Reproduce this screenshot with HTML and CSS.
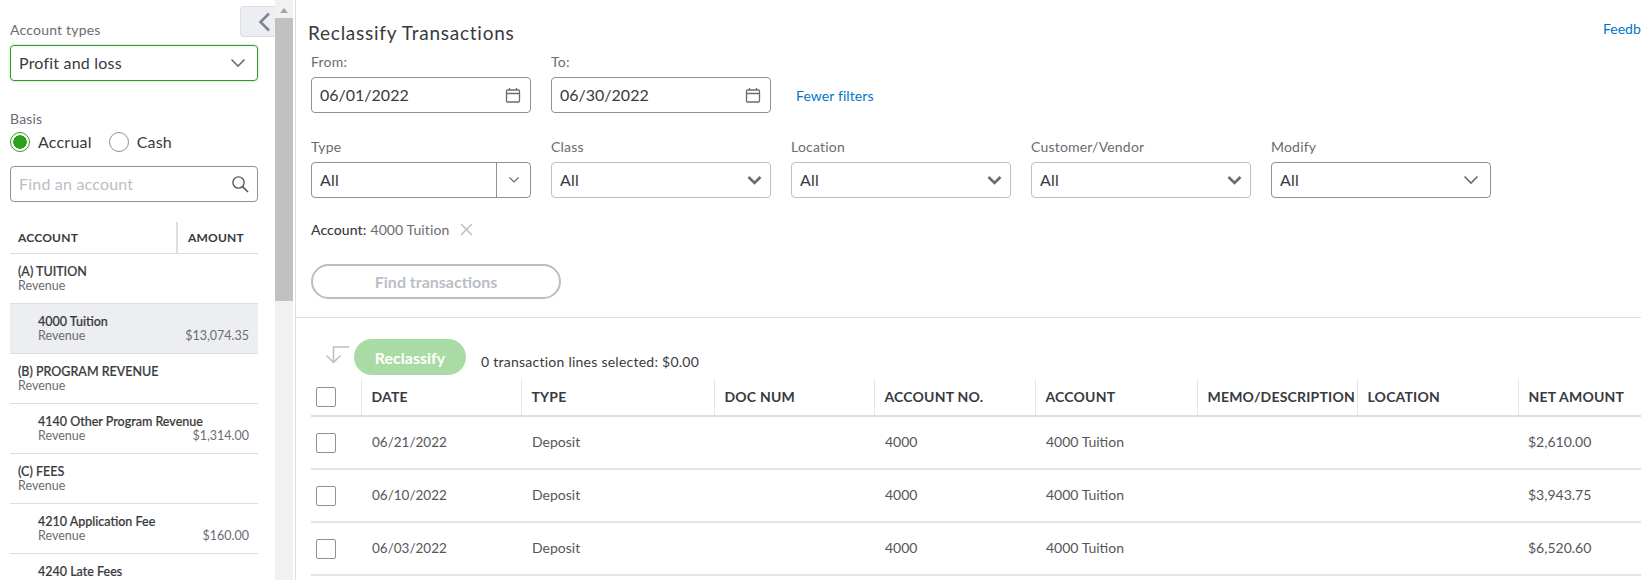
FILE: index.html
```html
<!doctype html>
<html>
	<head>
		<title>Reclassify Transactions</title>
		<link rel='stylesheet' href='styles.css'>
	</head>
	<body>
		<div class='sidebar'>
			<button class='collapse' type='button' aria-label='Collapse'>
				<svg width='13' height='20' viewBox='0 0 13 20'><path d='M11 1.500 2.500 10l8.500 8.500' fill='none' stroke='#7d8794' stroke-width='2.600'/></svg>
			</button>
			<div class='side-label'>Account types</div>
			<div class='field focus'>
				<span class='value'>Profit and loss</span>
				<svg class='chev' width='16' height='10' viewBox='0 0 16 10'><path d='M1.500 1.500 8 8l6.500-6.500' fill='none' stroke='#6b6c72' stroke-width='1.600'/></svg>
			</div>
			<div class='side-label basis'>Basis</div>
			<div class='radios'>
				<span class='radio on'></span><span class='radio-text'>Accrual</span>
				<span class='radio'></span><span class='radio-text'>Cash</span>
			</div>
			<div class='field search'>
				<span class='placeholder'>Find an account</span>
				<svg width='18' height='18' viewBox='0 0 18 18'><circle cx='7.500' cy='7.500' r='5.600' fill='none' stroke='#55565b' stroke-width='1.400'/><path d='m11.600 11.600 5.400 5.400' stroke='#55565b' stroke-width='1.600'/></svg>
			</div>
			<div class='acct-head'>
				<div class='acct-col'>ACCOUNT</div>
				<div class='amt-col'>AMOUNT</div>
			</div>
			<div class='acct-row group'>
				<div class='acct-name'>(A) TUITION</div>
				<div class='acct-sub'><span>Revenue</span></div>
			</div>
			<div class='acct-row child selected'>
				<div class='acct-name'>4000 Tuition</div>
				<div class='acct-sub'><span>Revenue</span><span>$13,074.35</span></div>
			</div>
			<div class='acct-row group'>
				<div class='acct-name'>(B) PROGRAM REVENUE</div>
				<div class='acct-sub'><span>Revenue</span></div>
			</div>
			<div class='acct-row child'>
				<div class='acct-name'>4140 Other Program Revenue</div>
				<div class='acct-sub'><span>Revenue</span><span>$1,314.00</span></div>
			</div>
			<div class='acct-row group'>
				<div class='acct-name'>(C) FEES</div>
				<div class='acct-sub'><span>Revenue</span></div>
			</div>
			<div class='acct-row child'>
				<div class='acct-name'>4210 Application Fee</div>
				<div class='acct-sub'><span>Revenue</span><span>$160.00</span></div>
			</div>
			<div class='acct-row child'>
				<div class='acct-name'>4240 Late Fees</div>
			</div>
		</div>
		<div class='scrollbar'>
			<div class='scroll-up'></div>
			<div class='scroll-thumb'></div>
		</div>
		<div class='main'>
			<div class='filters'>
				<div class='title-row'>
					<h1>Reclassify Transactions</h1>
					<a class='feedback' href='#'>Feedback</a>
				</div>
				<div class='filter-row dates'>
					<div class='filter'>
						<label>From:</label>
						<div class='field'>
							<span class='value date'>06/01/2022</span>
							<svg class='cal' width='16' height='16' viewBox='0 0 16 16'><path d='M2.500 3h11a1 1 0 0 1 1 1v10a1 1 0 0 1-1 1h-11a1 1 0 0 1-1-1V4a1 1 0 0 1 1-1zM1.500 6.500h13M4.500 1v2.500M11.500 1v2.500' fill='none' stroke='#6b6c72' stroke-width='1.300'/></svg>
						</div>
					</div>
					<div class='filter'>
						<label>To:</label>
						<div class='field'>
							<span class='value date'>06/30/2022</span>
							<svg class='cal' width='16' height='16' viewBox='0 0 16 16'><path d='M2.500 3h11a1 1 0 0 1 1 1v10a1 1 0 0 1-1 1h-11a1 1 0 0 1-1-1V4a1 1 0 0 1 1-1zM1.500 6.500h13M4.500 1v2.500M11.500 1v2.500' fill='none' stroke='#6b6c72' stroke-width='1.300'/></svg>
						</div>
					</div>
					<a class='fewer' href='#'>Fewer filters</a>
				</div>
				<div class='filter-row'>
					<div class='filter'>
						<label>Type</label>
						<div class='field split'>
							<span class='value'>All</span>
							<span class='split-btn'><svg width='12' height='8' viewBox='0 0 12 8'><path d='m1.500 1.500 4.500 4.500 4.500-4.500' fill='none' stroke='#6b6c72' stroke-width='1.200'/></svg></span>
						</div>
					</div>
					<div class='filter'>
						<label>Class</label>
						<div class='field light'>
							<span class='value'>All</span>
							<svg width='15' height='10' viewBox='0 0 15 10'><path d='m1.500 2 6 6 6-6' fill='none' stroke='#6b6c72' stroke-width='2.600'/></svg>
						</div>
					</div>
					<div class='filter'>
						<label>Location</label>
						<div class='field light'>
							<span class='value'>All</span>
							<svg width='15' height='10' viewBox='0 0 15 10'><path d='m1.500 2 6 6 6-6' fill='none' stroke='#6b6c72' stroke-width='2.600'/></svg>
						</div>
					</div>
					<div class='filter'>
						<label>Customer/Vendor</label>
						<div class='field light'>
							<span class='value'>All</span>
							<svg width='15' height='10' viewBox='0 0 15 10'><path d='m1.500 2 6 6 6-6' fill='none' stroke='#6b6c72' stroke-width='2.600'/></svg>
						</div>
					</div>
					<div class='filter'>
						<label>Modify</label>
						<div class='field'>
							<span class='value'>All</span>
							<svg class='chev' width='16' height='10' viewBox='0 0 16 10'><path d='M1.500 1.500 8 8l6.500-6.500' fill='none' stroke='#6b6c72' stroke-width='1.600'/></svg>
						</div>
					</div>
				</div>
				<div class='chip'>
					<b>Account:</b> <span>4000 Tuition</span>
					<svg width='13' height='13' viewBox='0 0 13 13'><path d='m1 1 11 11M12 1 1 12' stroke='#babec5' stroke-width='1.500'/></svg>
				</div>
				<button class='find' type='button'>Find transactions</button>
			</div>
			<div class='results'>
				<div class='toolbar'>
					<svg width='24' height='18' viewBox='0 0 24 18'><path d='M24 1H8.500v15M1.500 9.500l7 7 7-7' fill='none' stroke='#babec5' stroke-width='1.500'/></svg>
					<button class='reclassify' type='button'>Reclassify</button>
					<span class='selected-count'>0 transaction lines selected: $0.00</span>
				</div>
				<table>
					<thead>
						<tr>
							<th class='c-check'><span class='check'></span></th>
							<th class='c-date'>DATE</th>
							<th class='c-type'>TYPE</th>
							<th class='c-doc'>DOC NUM</th>
							<th class='c-no'>ACCOUNT NO.</th>
							<th class='c-acct'>ACCOUNT</th>
							<th class='c-memo'>MEMO/DESCRIPTION</th>
							<th class='c-loc'>LOCATION</th>
							<th>NET AMOUNT</th>
						</tr>
					</thead>
					<tbody>
						<tr>
							<td><span class='check'></span></td>
							<td class='row-date'>06/21/2022</td><td>Deposit</td><td></td><td>4000</td><td>4000 Tuition</td><td></td><td></td><td class='row-amt'>$2,610.00</td>
						</tr>
						<tr>
							<td><span class='check'></span></td>
							<td class='row-date'>06/10/2022</td><td>Deposit</td><td></td><td>4000</td><td>4000 Tuition</td><td></td><td></td><td class='row-amt'>$3,943.75</td>
						</tr>
						<tr>
							<td><span class='check'></span></td>
							<td class='row-date'>06/03/2022</td><td>Deposit</td><td></td><td>4000</td><td>4000 Tuition</td><td></td><td></td><td class='row-amt'>$6,520.60</td>
						</tr>
					</tbody>
				</table>
			</div>
		</div>
	</body>
</html>
```

FILE: styles.css
```css
* {
	box-sizing: border-box;
}
html, body {
	height: 100%;
}
body {
	margin: 0;
	display: flex;
	overflow: hidden;
	background: #fff;
	color: #393a3d;
	font-family: Lato, "Open Sans", sans-serif;
	font-size: 14px;
}
button {
	font-family: inherit;
}

/* left account list */
.sidebar {
	position: relative;
	flex: 0 0 275px;
	height: 580px;
	overflow: hidden;
	padding: 22px 17px 0 10px;
}
.collapse {
	position: absolute;
	top: 6px;
	right: 0;
	display: flex;
	align-items: center;
	width: 35px;
	height: 31px;
	padding: 0 0 0 17px;
	border: 1px solid #dcdee2;
	border-right: 0;
	border-radius: 4px 0 0 4px;
	background: #eceef1;
}
.side-label {
	height: 16px;
	line-height: 16px;
	color: #6b6c72;
	letter-spacing: .2px;
}
.basis {
	margin-top: 30px;
}
.field {
	display: flex;
	align-items: center;
	justify-content: space-between;
	height: 36px;
	margin-top: 7px;
	padding: 0 8px;
	border: 1px solid #8d9096;
	border-radius: 4px;
	font-size: 16px;
	letter-spacing: .2px;
}
.value, .placeholder, .radio-text {
	margin-top: -2px;
}
.value {
	color: #393a3d;
}
.date {
	letter-spacing: 0;
}
.focus {
	border-color: #2ca01c;
	box-shadow: 0 0 2px 1px #e3e5e8;
}
.chev {
	margin-right: 3px;
}
.cal {
	margin-right: 1px;
}
.radios {
	display: flex;
	align-items: center;
	height: 20px;
	margin-top: 5px;
	font-size: 16px;
	letter-spacing: .2px;
}
.radio {
	width: 20px;
	height: 20px;
	border: 1px solid #8d9096;
	border-radius: 50%;
}
.radio.on {
	border-color: #2ca01c;
	background: radial-gradient(circle, #2ca01c 0 6.5px, #fff 7px);
}
.radio-text {
	margin-right: 17px;
	margin-left: 8px;
}
.search {
	margin-top: 14px;
}
.placeholder {
	color: #babec5;
}
.acct-head {
	display: flex;
	height: 32px;
	margin-top: 20px;
	border-bottom: 1px solid #dcdee2;
	font-size: 12px;
	font-weight: 700;
	letter-spacing: .2px;
	line-height: 31px;
}
.acct-col {
	flex: 0 0 168px;
	padding-left: 8px;
	border-right: 2px solid #dcdee2;
}
.amt-col {
	padding-left: 10px;
}
.acct-row {
	height: 50px;
	padding: 11px 9px 0 8px;
	border-bottom: 1px solid #dcdee2;
	font-size: 12.5px;
	line-height: 14px;
}
.acct-row.child {
	padding-left: 28px;
}
.acct-row.selected {
	background: #eceef1;
}
.acct-name {
	font-weight: 500;
	-webkit-text-stroke: .2px;
}
.acct-sub {
	display: flex;
	justify-content: space-between;
	color: #6b6c72;
}

.scrollbar {
	flex: 0 0 18px;
	height: 580px;
	background: #f1f1f1;
}
.scroll-up {
	width: 0;
	margin: 8px auto 4px;
	border: 4px solid transparent;
	border-top: 0;
	border-bottom: 5px solid #a3a3a3;
}
.scroll-thumb {
	height: 283px;
	margin-top: 5px;
	background: #c1c1c1;
}

/* main panel */
.main {
	flex: 1;
	min-width: 0;
	margin-left: 2px;
	border-left: 1px solid #dcdee2;
}
.filters {
	height: 318px;
	padding: 21px 0 0 15px;
	border-bottom: 1px solid #dcdee2;
}
.title-row {
	display: flex;
	justify-content: space-between;
	height: 24px;
	margin-left: -3px;
	white-space: nowrap;
	overflow: hidden;
}
h1 {
	margin: 0;
	font-size: 19px;
	font-weight: 400;
	letter-spacing: .75px;
	line-height: 24px;
}
.feedback {
	width: 38px;
	overflow: hidden;
	margin-top: -1px;
	color: #0077c5;
	font-size: 14px;
	text-decoration: none;
}
.filter-row {
	display: flex;
	gap: 20px;
	margin-top: 26px;
}
.filter-row.dates {
	margin-top: 9px;
}
.filter {
	flex: 0 0 220px;
}
.filter label {
	display: block;
	height: 16px;
	line-height: 16px;
	color: #6b6c72;
	letter-spacing: .2px;
}
.fewer {
	margin: 33px 0 0 5px;
	color: #0077c5;
	font-size: 14px;
	letter-spacing: .1px;
	text-decoration: none;
}
.field.light {
	border-color: #babec5;
}
.split {
	padding-right: 0;
}
.split-btn {
	display: flex;
	align-items: center;
	justify-content: center;
	width: 34px;
	height: 100%;
	border-left: 1px solid #8d9096;
}
.chip {
	display: flex;
	align-items: center;
	gap: 4px;
	height: 16px;
	margin-top: 23px;
	color: #6b6c72;
	letter-spacing: .1px;
}
.chip b {
	color: #393a3d;
	font-weight: 500;
}
.chip svg {
	margin-left: 7px;
}
.find {
	display: block;
	width: 250px;
	height: 35px;
	margin-top: 27px;
	border: 2px solid #babec5;
	border-radius: 18px;
	background: #fff;
	color: #babec5;
	font-size: 16px;
	font-weight: 700;
}
.results {
	padding-left: 15px;
}
.toolbar {
	display: flex;
	align-items: center;
	height: 36px;
	margin-top: 21px;
	padding-left: 14px;
}
.toolbar svg {
	margin-top: -5px;
}
.reclassify {
	width: 112px;
	height: 36px;
	margin-left: 5px;
	border: 0;
	border-radius: 18px;
	background: #abdba4;
	color: #fff;
	font-size: 16px;
	font-weight: 700;
}
.selected-count {
	margin: 8px 0 0 15px;
	font-size: 14px;
	letter-spacing: .25px;
}
table {
	width: 1330px;
	margin-top: 4px;
	border-collapse: collapse;
	table-layout: fixed;
}
th {
	height: 37px;
	padding: 0 0 2px 10px;
	border-bottom: 2px solid #dcdee2;
	border-left: 1px solid #e3e5e8;
	font-size: 14px;
	font-weight: 700;
	letter-spacing: .2px;
	text-align: left;
	white-space: nowrap;
}
th:first-child, td:first-child {
	padding-left: 5px;
	padding-bottom: 0;
	border-left: 0;
}
td {
	height: 53px;
	padding: 0 0 2px 11px;
	border-bottom: 2px solid #e3e5e8;
	color: #55565b;
	font-size: 14px;
}
.row-date {
	font-size: 13.5px;
}
.row-amt {
	padding-left: 10px;
}
.check {
	display: block;
	width: 20px;
	height: 20px;
	border: 1px solid #8d9096;
	border-radius: 2px;
	background: #fff;
}
.c-check { width: 50px; }
.c-date { width: 160px; }
.c-type { width: 193px; }
.c-doc { width: 160px; }
.c-no { width: 161px; }
.c-acct { width: 162px; }
.c-memo { width: 160px; }
.c-loc { width: 161px; }
```
